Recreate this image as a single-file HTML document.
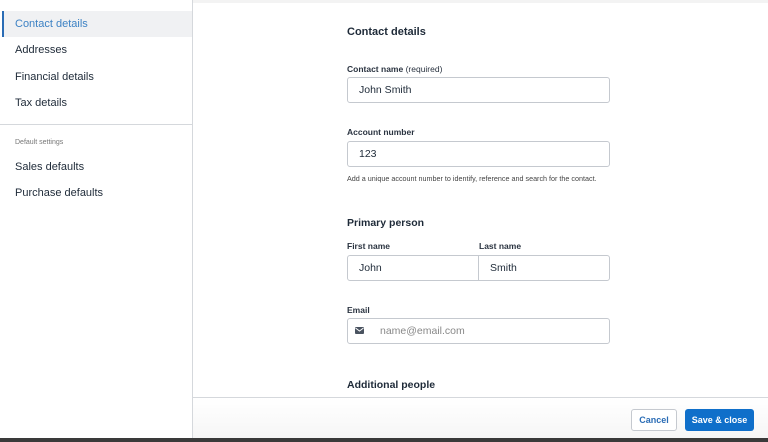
<!DOCTYPE html>
<html><head><style>
*{box-sizing:border-box;margin:0;padding:0}
body{width:768px;height:442px;overflow:hidden;background:#fff;font-family:"Liberation Sans",sans-serif;color:#1e2a38;position:relative}
.a{position:absolute}
.side{left:0;top:0;width:193px;height:438px;border-right:1px solid #d5d8dc;background:#fff}
.it{position:absolute;left:15px;font-size:11px;color:#1e2a38}
.lbl{position:absolute;left:347px;font-size:8.5px;font-weight:bold;color:#2a3340}
.inp{position:absolute;border:1px solid #c5c9cf;border-radius:3px;height:26px;font-size:10.5px;padding-left:11px;line-height:24px;background:#fff}
h3{position:absolute;left:347px;font-size:11px;font-weight:bold;color:#1e2a38}
</style></head><body>
<div class="a" style="left:0;top:0;width:768px;height:3px;background:#f3f3f3"></div>
<div class="a side"></div>
<div class="a" style="left:2px;top:11px;width:190px;height:26px;background:#f0f1f3"></div>
<div class="a" style="left:2px;top:11px;width:2px;height:26px;background:#2a6cb5"></div>
<div class="it" style="top:18px;color:#3d82c4">Contact details</div>
<div class="it" style="top:44px">Addresses</div>
<div class="it" style="top:71px">Financial details</div>
<div class="it" style="top:97px">Tax details</div>
<div class="a" style="left:0;top:124px;width:192px;height:1px;background:#d5d8dc"></div>
<div class="it" style="top:139px;font-size:7px;color:#777">Default settings</div>
<div class="it" style="top:161px">Sales defaults</div>
<div class="it" style="top:187px">Purchase defaults</div>

<h3 style="top:26px">Contact details</h3>
<div class="lbl" style="top:64px">Contact name <span style="font-weight:normal">(required)</span></div>
<div class="inp" style="left:347px;top:77px;width:263px">John Smith</div>
<div class="lbl" style="top:127px">Account number</div>
<div class="inp" style="left:347px;top:141px;width:263px">123</div>
<div class="a" style="left:347px;top:174px;font-size:7.2px;color:#444">Add a unique account number to identify, reference and search for the contact.</div>
<h3 style="top:217px;font-size:10.5px">Primary person</h3>
<div class="lbl" style="top:241px">First name</div>
<div class="lbl" style="top:241px;left:479px">Last name</div>
<div class="inp" style="left:347px;top:255px;width:132px;border-radius:3px 0 0 3px">John</div>
<div class="inp" style="left:478px;top:255px;width:132px;border-radius:0 3px 3px 0">Smith</div>
<div class="lbl" style="top:305px">Email</div>
<div class="inp" style="left:347px;top:318px;width:263px;padding-left:32px;color:#888">name@email.com</div>
<svg class="a" style="left:355px;top:327px" width="9" height="7" viewBox="0 0 9 7"><rect width="9" height="7" rx="1" fill="#4a5360"/><path d="M0.5 1 L4.5 4 L8.5 1" stroke="#fff" stroke-width="1" fill="none"/></svg>
<h3 style="top:379px;font-size:10.5px">Additional people</h3>
<div class="a" style="left:193px;top:397px;width:575px;height:1px;background:#d5d8dc"></div>
<div class="a" style="left:193px;top:398px;width:575px;height:40px;background:linear-gradient(#fff,#f6f6f6)"></div>
<div class="a" style="left:631px;top:409px;width:46px;height:22px;border:1px solid #c5c9cf;border-radius:3px;background:#fff;color:#2a6cb5;font-size:9px;font-weight:bold;text-align:center;line-height:20px">Cancel</div>
<div class="a" style="left:685px;top:409px;width:69px;height:22px;border-radius:3px;background:#0f6fca;color:#fff;font-size:9px;font-weight:bold;text-align:center;line-height:22px">Save &amp; close</div>
<div class="a" style="left:0;top:438px;width:768px;height:4px;background:#3a3a3a"></div>
</body></html>
